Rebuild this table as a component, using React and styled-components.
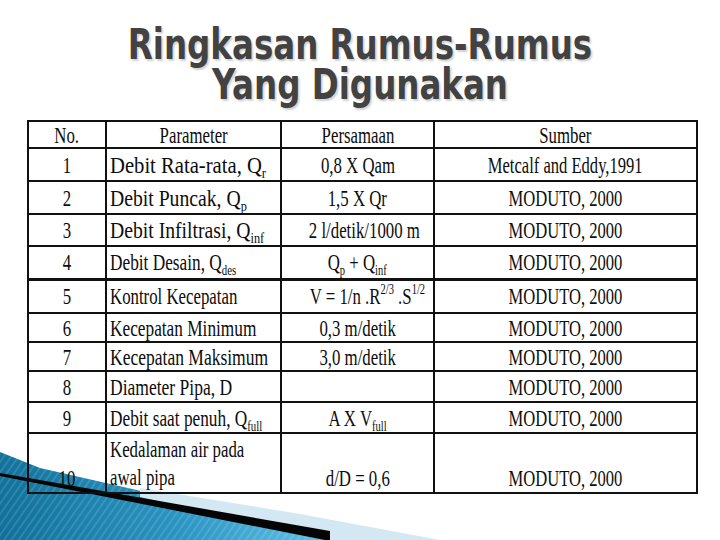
import React from 'react';
import styled, { createGlobalStyle } from 'styled-components';

const GlobalStyle = createGlobalStyle`
  html, body {
    margin: 0;
    padding: 0;
    background: #ffffff;
  }
  #root {
    width: 720px;
    height: 540px;
    overflow: hidden;
  }
`;

const Slide = styled.div`
  position: relative;
  width: 720px;
  height: 540px;
  background: #ffffff;
  display: flex;
  flex-direction: column;
  align-items: center;
`;

const Decoration = styled.svg`
  position: absolute;
  left: 0;
  top: 0;
  z-index: 0;
  pointer-events: none;
`;

const Title = styled.h1`
  position: relative;
  z-index: 1;
  margin: 25px 0 0 0;
  font-family: "DejaVu Sans Condensed", "DejaVu Sans", sans-serif;
  font-weight: bold;
  font-size: 42px;
  line-height: 40px;
  color: #424242;
  text-align: center;
  text-shadow: 2px 2px 2px #d2d2d2;
  transform: scaleX(0.86);
`;

const Table = styled.table`
  position: relative;
  z-index: 1;
  margin-top: 15px;
  margin-left: 5px;
  width: 671px;
  table-layout: fixed;
  border-collapse: collapse;
  font-family: "Liberation Serif", "Times New Roman", serif;
  font-size: 24px;
  color: #0d0d0d;
`;

const Row = styled.tr`
  height: ${(p) => p.h}px;
`;

const Cell = styled.td`
  border: 2px solid #111111;
  border-bottom-width: ${(p) => (p.thick ? 3 : 2)}px;
  padding: 0 3px;
  text-align: ${(p) => p.align || 'center'};
  vertical-align: ${(p) => p.valign || 'middle'};
  white-space: nowrap;
  overflow: visible;
  line-height: ${(p) => p.lh || 22}px;
`;

const Txt = styled.span`
  display: inline-block;
  transform: scaleX(${(p) => p.sx || 0.7});
  transform-origin: ${(p) => (p.align === 'left' ? 'left center' : 'center center')};
`;

const Sub = styled.sub`
  font-size: 15px;
  vertical-align: -5px;
  line-height: 0;
`;

const Sup = styled.sup`
  font-size: 15px;
  vertical-align: 10px;
  line-height: 0;
`;

const Col = styled.col`
  width: ${(p) => p.w}px;
`;

const rows = [
  { h: 33, no: '1', par: <>Debit Rata-rata, Q<Sub>r</Sub></>, psx: 0.86, eq: '0,8 X Qam', src: 'Metcalf and Eddy,1991' },
  { h: 33, no: '2', par: <>Debit Puncak, Q<Sub>p</Sub></>, psx: 0.82, eq: '1,5 X Qr', src: 'MODUTO, 2000' },
  { h: 32, no: '3', par: <>Debit Infiltrasi, Q<Sub>inf</Sub></>, psx: 0.82, eq: '2 l/detik/1000 m', src: 'MODUTO, 2000' },
  { h: 33, no: '4', par: <>Debit Desain, Q<Sub>des</Sub></>, psx: 0.72, eq: <>Q<Sub>p</Sub> + Q<Sub>inf</Sub></>, src: 'MODUTO, 2000', thick: true },
  { h: 34, no: '5', par: 'Kontrol Kecepatan', psx: 0.7, eq: <>V = 1/n .R<Sup>2/3</Sup> .S<Sup>1/2</Sup></>, src: 'MODUTO, 2000' },
  { h: 29, no: '6', par: 'Kecepatan Minimum', psx: 0.72, eq: '0,3 m/detik', src: 'MODUTO, 2000' },
  { h: 29, no: '7', par: 'Kecepatan Maksimum', psx: 0.73, eq: '3,0 m/detik', src: 'MODUTO, 2000' },
  { h: 31, no: '8', par: 'Diameter Pipa, D', psx: 0.73, eq: '', src: 'MODUTO, 2000' },
  { h: 31, no: '9', par: <>Debit saat penuh, Q<Sub>full</Sub></>, psx: 0.72, eq: <>A X V<Sub>full</Sub></>, src: 'MODUTO, 2000' },
];

export default function App() {
  return (
    <>
      <GlobalStyle />
      <Slide>
        <Decoration width="720" height="540" viewBox="0 0 720 540">
          <defs>
            <linearGradient id="blue" x1="0" y1="540" x2="320" y2="480" gradientUnits="userSpaceOnUse">
              <stop offset="0" stopColor="#0f6f98" />
              <stop offset="0.55" stopColor="#2b94c2" />
              <stop offset="1" stopColor="#62c3e8" />
            </linearGradient>
            <pattern id="stripes" width="6" height="6" patternUnits="userSpaceOnUse" patternTransform="rotate(35)">
              <rect width="2" height="6" fill="#ffffff" opacity="0.12" />
            </pattern>
          </defs>
          <polygon points="0,452 40,468 330,534 330,540 0,540" fill="url(#blue)" />
          <polygon points="0,452 40,468 330,534 330,540 0,540" fill="url(#stripes)" />
          <polygon points="140,488 300,514 440,540 330,540 140,497" fill="#d3e8f2" />
          <polygon points="0,473 330,531 330,541 0,476" fill="#050505" />
        </Decoration>
        <Title>
          Ringkasan Rumus-Rumus
          <br />
          Yang Digunakan
        </Title>
        <Table>
          <colgroup>
            <Col w={78} />
            <Col w={175} />
            <Col w={153} />
            <Col w={263} />
          </colgroup>
          <tbody>
            <Row h={27}>
              <Cell><Txt>No.</Txt></Cell>
              <Cell><Txt>Parameter</Txt></Cell>
              <Cell><Txt>Persamaan</Txt></Cell>
              <Cell><Txt>Sumber</Txt></Cell>
            </Row>
            {rows.map((r) => (
              <Row key={r.no} h={r.h}>
                <Cell thick={r.thick}><Txt>{r.no}</Txt></Cell>
                <Cell thick={r.thick} align="left"><Txt align="left" sx={r.psx}>{r.par}</Txt></Cell>
                <Cell thick={r.thick}><Txt>{r.eq}</Txt></Cell>
                <Cell thick={r.thick}><Txt sx={0.69}>{r.src}</Txt></Cell>
              </Row>
            ))}
            <Row h={60}>
              <Cell valign="bottom" lh={28}><Txt>10</Txt></Cell>
              <Cell align="left" lh={28}><Txt align="left" sx={0.7}>Kedalaman air pada<br />awal pipa</Txt></Cell>
              <Cell valign="bottom" lh={28}><Txt>d/D = 0,6</Txt></Cell>
              <Cell valign="bottom" lh={28}><Txt sx={0.69}>MODUTO, 2000</Txt></Cell>
            </Row>
          </tbody>
        </Table>
      </Slide>
    </>
  );
}
